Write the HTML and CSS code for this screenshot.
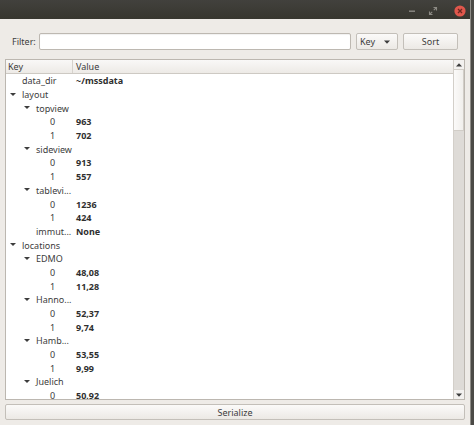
FILE: index.html
```html
<!DOCTYPE html>
<html>
<head>
<meta charset="utf-8">
<link rel="stylesheet" href="styles.css">
</head>
<body>
<div class="screen">
  <div class="window">
    <div class="titlebar">
      <div class="controls">
        <svg class="ctl" width="10" height="10" viewBox="0 0 10 10"><rect x="2" y="4.5" width="6" height="1.4" fill="#8c8a84"/></svg>
        <svg class="ctl" width="10" height="10" viewBox="0 0 10 10"><path d="M5.5 1.5h3v3M8.5 1.5L5.8 4.2M4.5 8.5h-3v-3M1.5 8.5l2.7-2.7" stroke="#8c8a84" stroke-width="1.1" fill="none"/></svg>
        <svg class="ctl close" width="12" height="12" viewBox="0 0 12 12"><circle cx="6" cy="6" r="5.6" fill="#e0574c"/><path d="M4 4l4 4M8 4l-4 4" stroke="#6b2620" stroke-width="1.3"/></svg>
      </div>
    </div>

    <div class="filterbar">
      <span class="label">Filter:</span>
      <div class="input"></div>
      <div class="combo"><span>Key</span><svg width="6" height="4" viewBox="0 0 6 4"><path d="M0 0.5h6L3 3.8z" fill="#3c3c3c"/></svg></div>
      <div class="btn sort">Sort</div>
    </div>

    <div class="tree">
      <div class="tree-main">
        <div class="header">
          <div class="hcell hkey">Key</div>
          <div class="hcell hval">Value</div>
        </div>
        <div class="rows">
          <div class="row"><div class="key l0"><span class="exp"></span>data_dir</div><div class="val">~/mssdata</div></div>
          <div class="row"><div class="key l0"><span class="exp open"></span>layout</div><div class="val"></div></div>
          <div class="row"><div class="key l1"><span class="exp open"></span>topview</div><div class="val"></div></div>
          <div class="row"><div class="key l2"><span class="exp"></span>0</div><div class="val">963</div></div>
          <div class="row"><div class="key l2"><span class="exp"></span>1</div><div class="val">702</div></div>
          <div class="row"><div class="key l1"><span class="exp open"></span>sideview</div><div class="val"></div></div>
          <div class="row"><div class="key l2"><span class="exp"></span>0</div><div class="val">913</div></div>
          <div class="row"><div class="key l2"><span class="exp"></span>1</div><div class="val">557</div></div>
          <div class="row"><div class="key l1"><span class="exp open"></span>tablevi...</div><div class="val"></div></div>
          <div class="row"><div class="key l2"><span class="exp"></span>0</div><div class="val">1236</div></div>
          <div class="row"><div class="key l2"><span class="exp"></span>1</div><div class="val">424</div></div>
          <div class="row"><div class="key l1"><span class="exp"></span>immut...</div><div class="val">None</div></div>
          <div class="row"><div class="key l0"><span class="exp open"></span>locations</div><div class="val"></div></div>
          <div class="row"><div class="key l1"><span class="exp open"></span>EDMO</div><div class="val"></div></div>
          <div class="row"><div class="key l2"><span class="exp"></span>0</div><div class="val">48,08</div></div>
          <div class="row"><div class="key l2"><span class="exp"></span>1</div><div class="val">11,28</div></div>
          <div class="row"><div class="key l1"><span class="exp open"></span>Hanno...</div><div class="val"></div></div>
          <div class="row"><div class="key l2"><span class="exp"></span>0</div><div class="val">52,37</div></div>
          <div class="row"><div class="key l2"><span class="exp"></span>1</div><div class="val">9,74</div></div>
          <div class="row"><div class="key l1"><span class="exp open"></span>Hamb...</div><div class="val"></div></div>
          <div class="row"><div class="key l2"><span class="exp"></span>0</div><div class="val">53,55</div></div>
          <div class="row"><div class="key l2"><span class="exp"></span>1</div><div class="val">9,99</div></div>
          <div class="row"><div class="key l1"><span class="exp open"></span>Juelich</div><div class="val"></div></div>
          <div class="row"><div class="key l2"><span class="exp"></span>0</div><div class="val">50,92</div></div>
        </div>
      </div>
      <div class="vscroll">
        <div class="sarrow"><svg width="6" height="4" viewBox="0 0 6 4"><path d="M0 3.5h6L3 0.2z" fill="#3c3c3c"/></svg></div>
        <div class="thumb"></div>
        <div class="track"></div>
        <div class="sarrow"><svg width="6" height="4" viewBox="0 0 6 4"><path d="M0 0.5h6L3 3.8z" fill="#3c3c3c"/></svg></div>
      </div>
    </div>

    <div class="btn serialize">Serialize</div>
  </div>
</div>
</body>
</html>
```

FILE: styles.css
```css
* { box-sizing: border-box; }
html, body { margin: 0; padding: 0; }
body {
  width: 474px;
  height: 425px;
  overflow: hidden;
  background: #4b4a46;
  font-family: "Noto Sans", "DejaVu Sans", sans-serif;
  font-size: 9px;
  color: #3c3c3c;
}
.screen { display: flex; width: 474px; height: 425px; }
.window {
  width: 471px;
  height: 425px;
  background: #eeebe7;
  border-right: 1px solid #8e8c87;
  display: flex;
  flex-direction: column;
}
.titlebar {
  height: 19px;
  flex: none;
  background: linear-gradient(#42413d, #37362f);
  display: flex;
  justify-content: flex-end;
  align-items: center;
}
.controls { display: flex; align-items: center; gap: 11px; padding-right: 4px; margin-top: 2px; }
.ctl { display: block; }
.close { margin-left: 5px; }

.filterbar {
  display: flex;
  align-items: center;
  height: 17px;
  margin-top: 14px;
  padding-left: 12px;
}
.label { width: 27px; color: #3c3c3c; }
.input {
  width: 312px;
  height: 17px;
  background: #fff;
  border: 1px solid #bdb8b1;
  border-radius: 2px;
  box-shadow: inset 0 1px 1px rgba(0,0,0,0.06);
}
.combo {
  margin-left: 5px;
  width: 42px;
  height: 17px;
  border: 1px solid #c3bfb9;
  border-radius: 2px;
  background: linear-gradient(#fbfaf9, #ece9e5);
  display: flex;
  align-items: center;
  justify-content: space-between;
  padding: 0 7px 0 3px;
}
.combo svg { display: block; }
.btn {
  height: 17px;
  border: 1px solid #c3bfb9;
  border-radius: 2px;
  background: linear-gradient(#fbfaf9, #ece9e5);
  display: flex;
  align-items: center;
  justify-content: center;
  color: #3c3c3c;
}
.sort { margin-left: 5px; width: 55px; }

.tree {
  margin: 9px 0 0 5px;
  width: 460px;
  height: 341px;
  border: 1px solid #bcb7b0;
  background: #fff;
  display: flex;
  overflow: hidden;
}
.tree-main { flex: 1; display: flex; flex-direction: column; overflow: hidden; }
.header {
  height: 14px;
  flex: none;
  display: flex;
  background: linear-gradient(#f9f8f7, #edeae6);
  border-bottom: 1px solid #cdc9c3;
}
.hcell { display: flex; align-items: center; height: 100%; }
.hkey { width: 67px; padding-left: 2px; border-right: 1px solid #d6d2cc; }
.hval { flex: 1; padding-left: 3px; }
.rows { flex: 1; overflow: hidden; }
.row { height: 13.7px; display: flex; align-items: center; white-space: nowrap; }
.key { width: 67px; display: flex; align-items: center; overflow: hidden; }
.l0 { padding-left: 4px; }
.l1 { padding-left: 18px; }
.l2 { padding-left: 32px; }
.exp { width: 12px; height: 4px; flex: none; display: block; position: relative; }
.exp.open::before {
  content: "";
  position: absolute;
  left: 0;
  top: 0;
  border-left: 3px solid transparent;
  border-right: 3px solid transparent;
  border-top: 3.5px solid #3c3c3c;
}
.val { padding-left: 3px; font-weight: bold; color: #2f2f2f; }

.vscroll {
  width: 11px;
  flex: none;
  display: flex;
  flex-direction: column;
  background: #e2dfdb;
  border-left: 1px solid #d3cfc9;
}
.sarrow { height: 9px; flex: none; display: flex; align-items: center; justify-content: center; background: #f3f1ef; }
.sarrow svg { display: block; }
.thumb {
  height: 62px;
  flex: none;
  background: linear-gradient(90deg, #fbfaf9, #f1efec);
  border: 1px solid #d1cdc7;
  border-left: none;
}
.track { flex: 1; background: #dedbd7; }

.serialize { margin: 4px 0 0 5px; width: 460px; height: 16px; }
```
